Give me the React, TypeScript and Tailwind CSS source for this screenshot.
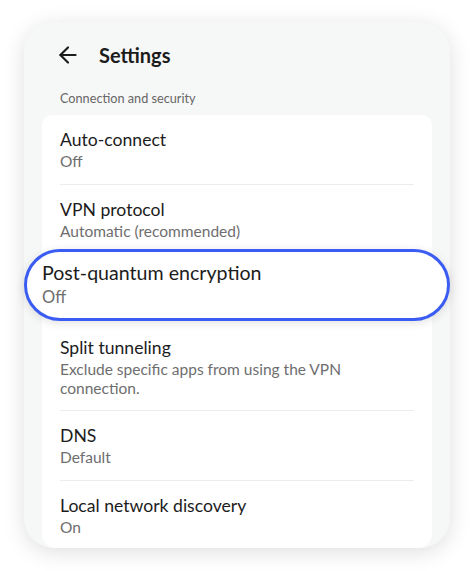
import { ArrowLeft } from 'lucide-react'

type Item = { title: string; sub: string }

const top: Item[] = [
  { title: 'Auto-connect', sub: 'Off' },
  { title: 'VPN protocol', sub: 'Automatic (recommended)' },
]

const bottom: Item[] = [
  { title: 'DNS', sub: 'Default' },
  { title: 'Local network discovery', sub: 'On' },
]

function Row({ item, divider, className = '' }: { item: Item; divider?: boolean; className?: string }) {
  return (
    <div className={`${className} ${divider ? 'border-b border-[#ececec]' : ''}`}>
      <div className="text-[17.6px] leading-[24px] text-[#1c1c1c]">{item.title}</div>
      <div className="text-[15.5px] leading-[19px] text-[#6e6e6e]">{item.sub}</div>
    </div>
  )
}

export default function App() {
  return (
    <div className="w-[474px] h-[571px] bg-white pt-[22px] pl-[24px] font-['Lato','Noto_Sans',sans-serif]">
      <div className="w-[426px] h-[526px] rounded-[30px] bg-[#f6f7f7] shadow-[0_4px_22px_rgba(0,0,0,0.13)] pt-[17px] px-[18px] flex flex-col">
        <div className="h-[32px] flex items-center px-[13px] gap-[18px]">
          <ArrowLeft size={26} strokeWidth={2} className="text-[#1c1c1c]" />
          <span className="text-[20px] font-bold text-[#1c1c1c]">Settings</span>
        </div>
        <div className="mt-[18px] px-[18px] text-[12.7px] leading-[18px] text-[#666]">Connection and security</div>
        <div className="mt-[8px] flex-1 bg-white rounded-t-[10px] rounded-b-[14px]">
          <div className="px-[18px]">
            <Row item={top[0]} divider className="pt-[13px] pb-[13px]" />
            <Row item={top[1]} className="pt-[13px] pb-[8px]" />
          </div>
          <div className="-mx-[18px] h-[72px] rounded-full border-[3px] border-[#3b5cf2] bg-white shadow-[0_2px_10px_rgba(0,0,0,0.12)] flex flex-col justify-center pl-[15px]">
            <div className="text-[19.6px] leading-[24px] text-[#1c1c1c]">Post-quantum encryption</div>
            <div className="text-[16.5px] leading-[24px] text-[#6e6e6e]">Off</div>
          </div>
          <div className="px-[18px]">
            <div className="pt-[15px] pb-[12px] border-b border-[#ececec]">
              <div className="text-[17.6px] leading-[24px] text-[#1c1c1c]">Split tunneling</div>
              <div className="text-[15.5px] leading-[19px] text-[#6e6e6e]">Exclude specific apps from using the VPN connection.</div>
            </div>
            <Row item={bottom[0]} divider className="pt-[13px] pb-[13px]" />
            <Row item={bottom[1]} className="pt-[13px] pb-[8px]" />
          </div>
        </div>
      </div>
    </div>
  )
}
